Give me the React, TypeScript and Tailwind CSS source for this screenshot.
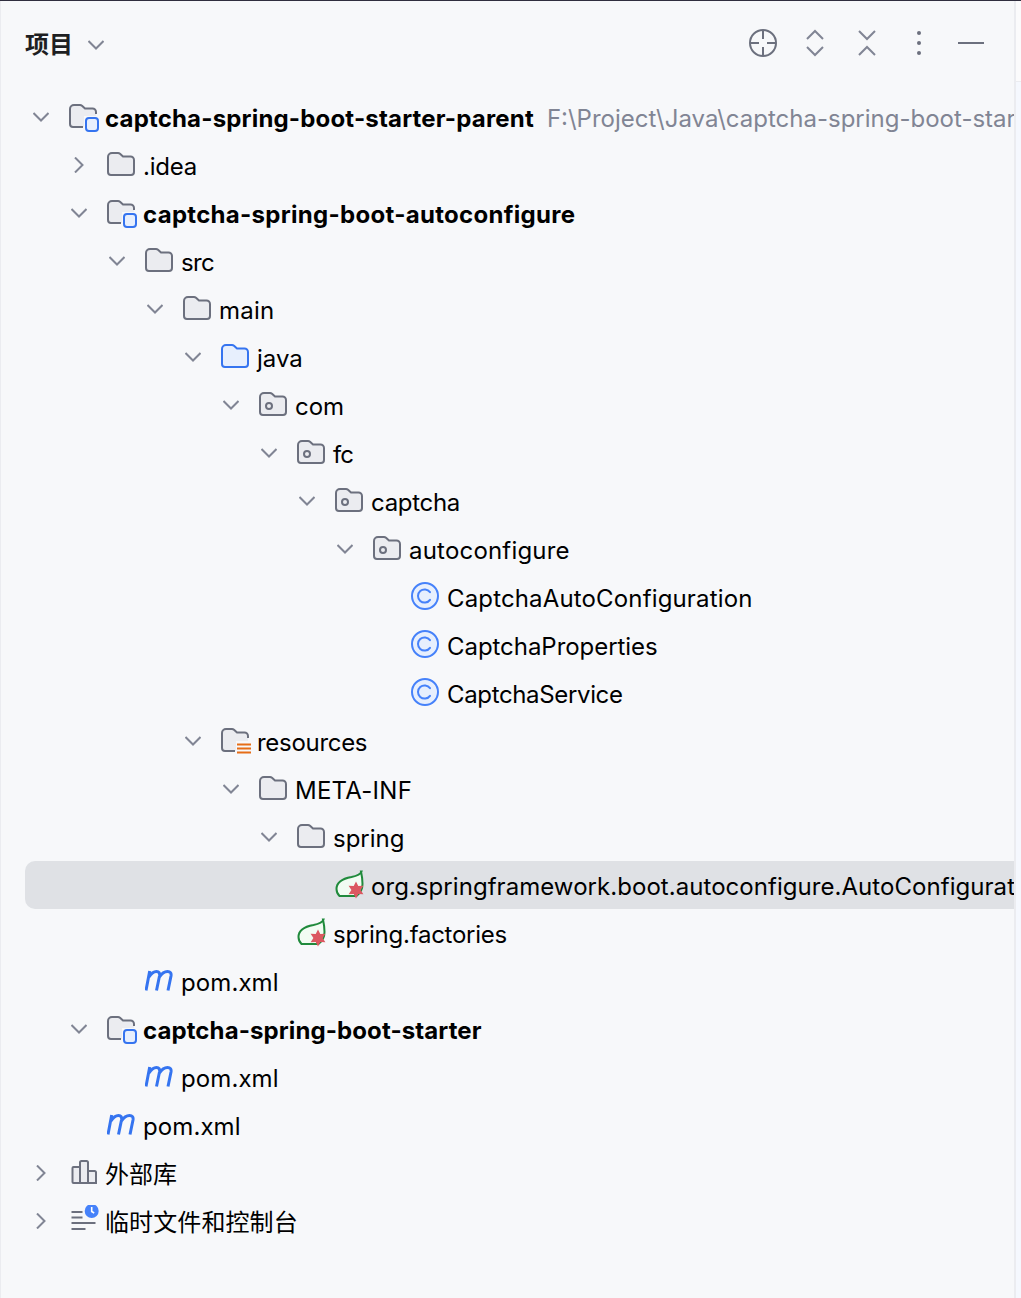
import React from "react";

const GRAY = "#6c707e";
const CHEV = "#818594";
const BLUE = "#3574f0";
const FOLDER = "M1 8a4 4 0 0 1 4-4h6a3 3 0 0 1 2 .8L16 7.5h7.5a3.5 3.5 0 0 1 3.5 3.5v12a3 3 0 0 1-3 3H4a3 3 0 0 1-3-3Z";
const FOLDER_CUT = "M14 26H4a3 3 0 0 1-3-3V8a4 4 0 0 1 4-4h6a3 3 0 0 1 2 .8L16 7.5h7.5a3.5 3.5 0 0 1 3.5 3.5v2";

type IconKind = "module" | "folder" | "source" | "package" | "resources" | "class" | "spring" | "maven" | "library" | "scratch";

function Ico({ children }: { children: React.ReactNode }) {
  return (
    <svg width="32" height="32" viewBox="0 0 32 32" fill="none" className="shrink-0">
      {children}
    </svg>
  );
}

function Icon({ kind }: { kind: IconKind }) {
  switch (kind) {
    case "folder":
      return <Ico><path d={FOLDER} fill="#ebecf0" stroke={GRAY} strokeWidth="2" /></Ico>;
    case "source":
      return <Ico><path d={FOLDER} fill="#e7effd" stroke={BLUE} strokeWidth="2" /></Ico>;
    case "package":
      return (
        <Ico>
          <path d={FOLDER} fill="#ebecf0" stroke={GRAY} strokeWidth="2" />
          <circle cx="10" cy="17" r="3" stroke={GRAY} strokeWidth="2" />
        </Ico>
      );
    case "module":
      return (
        <Ico>
          <path d={FOLDER} fill="#ebecf0" stroke="none" />
          <path d={FOLDER_CUT} fill="none" stroke={GRAY} strokeWidth="2" />
          <rect x="15" y="15" width="15" height="15" fill="#f7f8fa" />
          <path d="M14 26H4" stroke={GRAY} strokeWidth="2" />
          <rect x="17" y="17" width="12" height="13" rx="3" fill="#e7effd" stroke={BLUE} strokeWidth="2" />
        </Ico>
      );
    case "resources":
      return (
        <Ico>
          <path d={FOLDER} fill="#ebecf0" stroke="none" />
          <path d={FOLDER_CUT} fill="none" stroke={GRAY} strokeWidth="2" />
          <rect x="15" y="16" width="15" height="15" fill="#f7f8fa" />
          <path d="M14 26H4" stroke={GRAY} strokeWidth="2" />
          <path d="M16 19.500h14M16 23.500h14M16 27.500h14" stroke="#e66d17" strokeWidth="2" />
        </Ico>
      );
    case "class":
      return (
        <Ico>
          <circle cx="14" cy="15" r="13" fill="#e7effd" stroke="#4682fa" strokeWidth="2" />
          <path d="M19 11.200a6.600 6.600 0 1 0 0 7.600" stroke="#4682fa" strokeWidth="2" strokeLinecap="round" />
        </Ico>
      );
    case "spring":
      return (
        <Ico>
          <path
            d="M26.500 2.500c-1 3-5 4.500-10 5.500C8 9.500 1.500 13 1.500 20c0 2.500 1 5 3 7h17c4-3 6-7 6-12 0-4-.5-8-1.500-12.500Z"
            fill="#f2fcf3"
            stroke="#208a3c"
            strokeWidth="2"
          />
          <polygon
            points="21,12.500 23.300,17 28.400,16.800 25.600,21 28.400,25.200 23.300,25 21,29.500 18.700,25 13.600,25.200 16.400,21 13.600,16.800 18.700,17"
            fill="#db5860"
          />
        </Ico>
      );
    case "maven":
      return (
        <Ico>
          <path
            d="M1 25.500 4.700 6M4 12C6.500 8 9 6.500 11.500 6.500c2.500 0 3.500 1.500 3 4.500L11.500 25.500M14.500 12C17 8 19.500 6.500 22.500 6.500c2.800 0 4 1.500 3.500 4.500L23 25.500"
            stroke={BLUE}
            strokeWidth="3"
            strokeLinejoin="round"
          />
        </Ico>
      );
    case "library":
      return (
        <Ico>
          <path
            d="M4.500 10H11V5.500A1.500 1.500 0 0 1 12.500 4h5A1.500 1.500 0 0 1 19 5.500V14h6.500A1.500 1.500 0 0 1 27 15.500V26H4.500a1 1 0 0 1-1-1V11a1 1 0 0 1 1-1Z"
            fill="#ebecf0"
            stroke={GRAY}
            strokeWidth="2"
          />
          <path d="M11 10v16M19 14v12" stroke={GRAY} strokeWidth="2" />
        </Ico>
      );
    case "scratch":
      return (
        <Ico>
          <path d="M2.500 7h11M2.500 12.500h11M2.500 18h24M2.500 24h14" stroke={GRAY} strokeWidth="2" />
          <circle cx="22.700" cy="6" r="7" fill="#4682fa" />
          <path d="M22.700 2v4.500l2.500 1.500" stroke="#ffffff" strokeWidth="1.600" />
        </Ico>
      );
  }
}

function Chevron({ open }: { open: boolean }) {
  return (
    <svg width="16" height="16" viewBox="0 0 16 16" fill="none" className="shrink-0">
      {open ? (
        <path d="M0.500 4l7.500 7.500L15.500 4" stroke={CHEV} strokeWidth="2" />
      ) : (
        <path d="M4 0.500l7.500 7.500L4 15.500" stroke={CHEV} strokeWidth="2" />
      )}
    </svg>
  );
}

type Row = {
  pad: string;
  icon: IconKind;
  text: string;
  track: string;
  bold?: boolean;
  hint?: string;
  chevron?: "open" | "closed";
  selected?: boolean;
};

const rows: Row[] = [
  { pad: "pl-[8px]", track: "tracking-[0.18px]", icon: "module", text: "captcha-spring-boot-starter-parent", bold: true, hint: "F:\\Project\\Java\\captcha-spring-boot-starter-parent", chevron: "open" },
  { pad: "pl-[46px]", track: "tracking-[-0.2px]", icon: "folder", text: ".idea", chevron: "closed" },
  { pad: "pl-[46px]", track: "tracking-[0.3px]", icon: "module", text: "captcha-spring-boot-autoconfigure", bold: true, chevron: "open" },
  { pad: "pl-[84px]", track: "tracking-[-0.6px]", icon: "folder", text: "src", chevron: "open" },
  { pad: "pl-[122px]", track: "tracking-[0.2px]", icon: "folder", text: "main", chevron: "open" },
  { pad: "pl-[160px]", track: "tracking-normal", icon: "source", text: "java", chevron: "open" },
  { pad: "pl-[198px]", track: "tracking-normal", icon: "package", text: "com", chevron: "open" },
  { pad: "pl-[236px]", track: "tracking-[-1px]", icon: "package", text: "fc", chevron: "open" },
  { pad: "pl-[274px]", track: "tracking-[-0.3px]", icon: "package", text: "captcha", chevron: "open" },
  { pad: "pl-[312px]", track: "tracking-[0.2px]", icon: "package", text: "autoconfigure", chevron: "open" },
  { pad: "pl-[350px]", track: "tracking-[0.15px]", icon: "class", text: "CaptchaAutoConfiguration" },
  { pad: "pl-[350px]", track: "tracking-[-0.05px]", icon: "class", text: "CaptchaProperties" },
  { pad: "pl-[350px]", track: "tracking-[-0.35px]", icon: "class", text: "CaptchaService" },
  { pad: "pl-[160px]", track: "tracking-[-0.3px]", icon: "resources", text: "resources", chevron: "open" },
  { pad: "pl-[198px]", track: "tracking-[0.25px]", icon: "folder", text: "META-INF", chevron: "open" },
  { pad: "pl-[236px]", track: "tracking-normal", icon: "folder", text: "spring", chevron: "open" },
  { pad: "pl-[274px]", track: "tracking-[0.05px]", icon: "spring", text: "org.springframework.boot.autoconfigure.AutoConfiguration.imports", selected: true },
  { pad: "pl-[236px]", track: "tracking-[-0.25px]", icon: "spring", text: "spring.factories" },
  { pad: "pl-[84px]", track: "tracking-[0.1px]", icon: "maven", text: "pom.xml" },
  { pad: "pl-[46px]", track: "tracking-[0.1px]", icon: "module", text: "captcha-spring-boot-starter", bold: true, chevron: "open" },
  { pad: "pl-[84px]", track: "tracking-[0.1px]", icon: "maven", text: "pom.xml" },
  { pad: "pl-[46px]", track: "tracking-[0.1px]", icon: "maven", text: "pom.xml" },
  { pad: "pl-[8px]", track: "tracking-normal", icon: "library", text: "外部库", chevron: "closed" },
  { pad: "pl-[8px]", track: "tracking-[0.1px]", icon: "scratch", text: "临时文件和控制台", chevron: "closed" },
];

const FONT = "font-['Inter','Noto_Sans_CJK_SC',sans-serif]";

export default function App() {
  return (
    <div className={`w-[1021px] h-[1298px] overflow-hidden bg-[#f7f8fa] flex flex-col ${FONT}`}>
      <div className="h-[1px] shrink-0 bg-[#302e3f]" />
      <div className="flex flex-1 min-h-0">
        <div className="w-[1014px] shrink-0 flex flex-col border-l border-[#ebecf0]">
          <header className="h-[92px] shrink-0 flex items-center pl-[24px] pr-[29px]">
            <span className="text-[24px] font-bold text-[#1e1f22] leading-none -mt-[4px]">项目</span>
            <svg width="16" height="16" viewBox="0 0 16 16" fill="none" className="ml-[15px] -mt-[4px]">
              <path d="M0.500 4l7.500 7.500L15.500 4" stroke={CHEV} strokeWidth="2" />
            </svg>
            <div className="ml-auto flex items-center gap-[24px] -mt-[8px]">
              <svg width="28" height="28" viewBox="0 0 28 28" fill="none">
                <circle cx="14" cy="14" r="13" stroke={GRAY} strokeWidth="2" />
                <path d="M14 1v9M14 18v9M1 14h9M18 14h9" stroke={GRAY} strokeWidth="2" />
              </svg>
              <svg width="28" height="28" viewBox="0 0 28 28" fill="none">
                <path d="M6 10l8-8 8 8M6 18l8 8 8-8" stroke={CHEV} strokeWidth="2" />
              </svg>
              <svg width="28" height="28" viewBox="0 0 28 28" fill="none">
                <path d="M6 2l8 8 8-8M6 26l8-8 8 8" stroke={CHEV} strokeWidth="2" />
              </svg>
              <svg width="28" height="28" viewBox="0 0 28 28" fill="none">
                <circle cx="14" cy="4" r="2" fill={GRAY} />
                <circle cx="14" cy="14" r="2" fill={GRAY} />
                <circle cx="14" cy="24" r="2" fill={GRAY} />
              </svg>
              <svg width="28" height="28" viewBox="0 0 28 28" fill="none">
                <path d="M1 14h26" stroke={GRAY} strokeWidth="2" />
              </svg>
            </div>
          </header>
          <div className="pl-[24px] overflow-hidden">
            {rows.map((r, i) => (
              <div
                key={i}
                className={`h-[48px] flex items-center whitespace-nowrap overflow-hidden rounded-l-[10px] text-[24px] text-black ${r.pad} ${r.selected ? "bg-[#dfe1e5]" : ""}`}
              >
                <span className="w-[36px] shrink-0 flex">
                  {r.chevron ? <Chevron open={r.chevron === "open"} /> : null}
                </span>
                <span className="w-[36px] shrink-0 flex">
                  <Icon kind={r.icon} />
                </span>
                <span className={`pt-[4px] ${r.track} ${r.bold ? "font-bold" : "font-normal"}`}>{r.text}</span>
                {r.hint ? <span className="pt-[4px] ml-[13px] text-[#818594]">{r.hint}</span> : null}
              </div>
            ))}
          </div>
        </div>
        <div className="flex-1 flex flex-col border-l-2 border-[#ebecf0]">
          <div className="h-[81px] border-b border-[#ebecf0] bg-[#fbfbfc]" />
          <div className="flex-1 bg-[#f5f8fe]" />
        </div>
      </div>
    </div>
  );
}
